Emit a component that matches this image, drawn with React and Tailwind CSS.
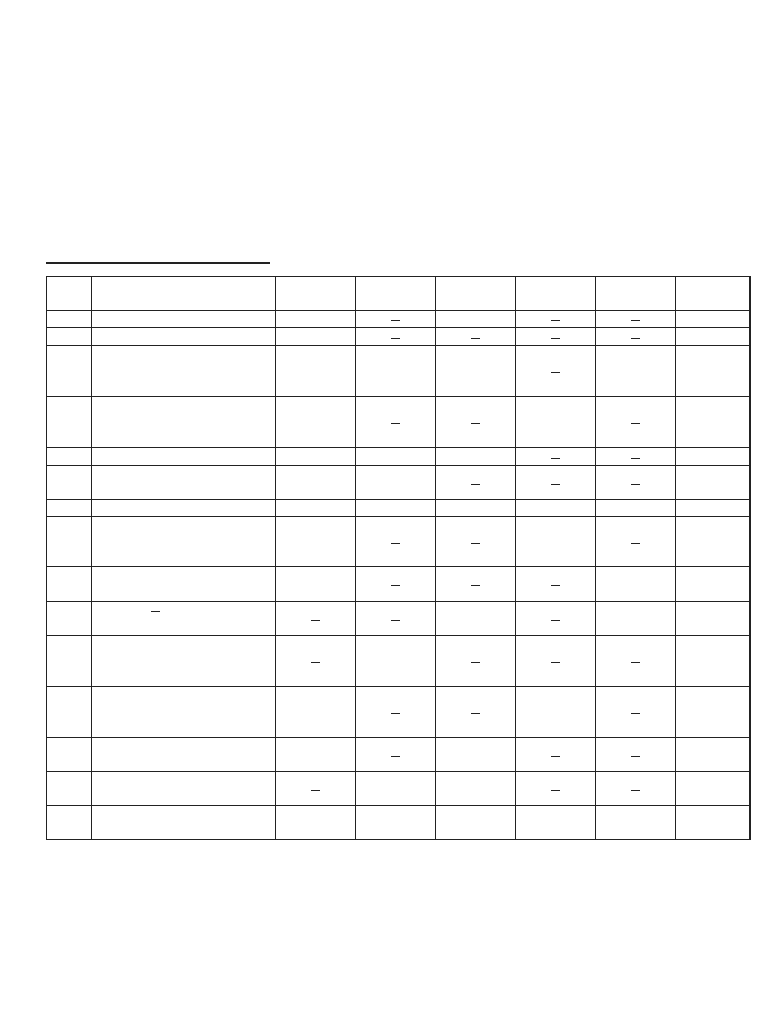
import React from 'react';

// column widths include each cell's right border
const COLS = 'grid-cols-[45px_184px_80px_80px_80px_80px_80px_75px]';
const ROWS =
  'grid-rows-[34px_17px_18px_51px_51px_18px_34px_17px_50px_35px_34px_51px_51px_34px_34px_34px]';

// which of the 8 columns carry a bar, per row
const marks = [
  [],
  [3, 5, 6],
  [3, 4, 5, 6],
  [5],
  [3, 4, 6],
  [5, 6],
  [4, 5, 6],
  [],
  [3, 4, 6],
  [3, 4, 5],
  [2, 3, 5],
  [2, 4, 5, 6],
  [3, 4, 6],
  [3, 5, 6],
  [2, 5, 6],
  [],
];

const Bar = () => <span className="block w-[9px] h-px bg-[#222] mt-[3px]" />;

const Cell = ({ row, col }) => {
  const last = col === 7;
  const base = `border-b border-[#222] ${last ? 'border-r-2' : 'border-r'}`;
  if (row === 10 && col === 1) {
    return (
      <div className={`${base} pl-[59px] pt-[9px]`}>
        <span className="block w-[9px] h-px bg-[#222]" />
      </div>
    );
  }
  return (
    <div className={`${base} flex items-center justify-center`}>
      {marks[row].includes(col) && <Bar />}
    </div>
  );
};

export default function App() {
  return (
    <div className="w-[768px] h-[1024px] bg-white font-['Liberation_Sans',sans-serif]">
      <div className="pt-[262px] pl-[46px]">
        <div className="w-[224px] h-[2px] bg-[#222]" />
        <div className={`mt-[12px] grid ${COLS} ${ROWS} w-fit border-t border-l border-[#222]`}>
          {marks.map((_, r) =>
            Array.from({ length: 8 }, (_, c) => <Cell key={`${r}-${c}`} row={r} col={c} />)
          )}
        </div>
      </div>
    </div>
  );
}
